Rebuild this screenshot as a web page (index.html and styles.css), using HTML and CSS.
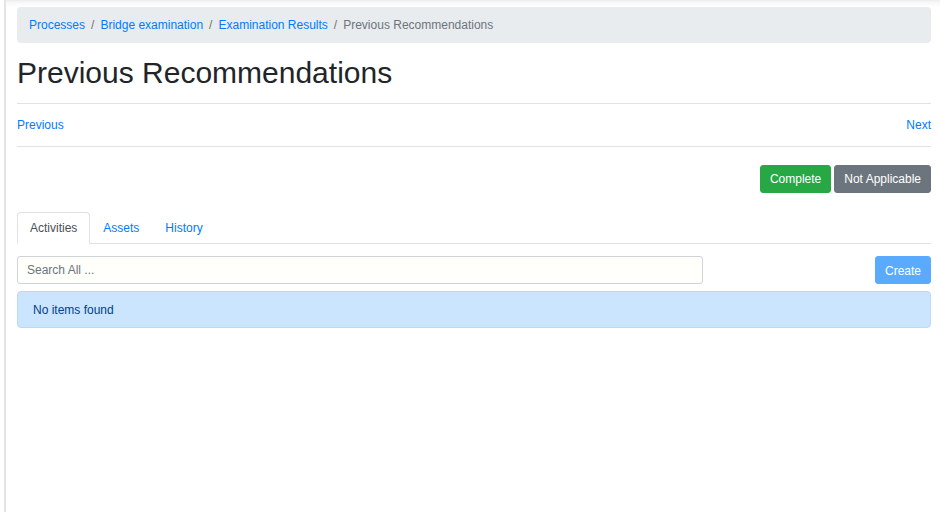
FILE: index.html
```html
<!DOCTYPE html>
<html>
<head>
<meta charset="utf-8">
<link rel="stylesheet" href="styles.css">
</head>
<body>
<div class="frame">
  <div class="page">
    <nav class="breadcrumb">
      <a href="#">Processes</a><span class="sep">/</span>
      <a href="#">Bridge examination</a><span class="sep">/</span>
      <a href="#">Examination Results</a><span class="sep">/</span>
      <span class="current">Previous Recommendations</span>
    </nav>
    <h1 class="title">Previous Recommendations</h1>
    <div class="pager">
      <a href="#">Previous</a>
      <a href="#">Next</a>
    </div>
    <div class="actions">
      <button class="btn btn-success">Complete</button>
      <button class="btn btn-secondary">Not Applicable</button>
    </div>
    <ul class="tabs">
      <li class="tab active">Activities</li>
      <li class="tab">Assets</li>
      <li class="tab">History</li>
    </ul>
    <div class="search-row">
      <input class="search" type="text" placeholder="Search All ...">
      <button class="btn btn-create">Create</button>
    </div>
    <div class="alert">No items found</div>
  </div>
</div>
</body>
</html>
```

FILE: styles.css
```css
* { box-sizing: border-box; }
html, body { margin: 0; padding: 0; background: #fff; }
body {
  font-family: "Liberation Sans", Arial, sans-serif;
  font-size: 12px;
  color: #212529;
  height: 512px;
  overflow: hidden;
}
a { color: #007bff; text-decoration: none; }
.frame {
  margin-left: 4px;
  border-left: 2px solid #e4e4e4;
  height: 512px;
  background: linear-gradient(#ececee 0, #f7f7f8 2px, #ffffff 7px);
}
.page {
  padding: 7px 9px 0 11px;
}
.breadcrumb {
  display: flex;
  align-items: center;
  background: #e9ecef;
  border-radius: 4px;
  height: 36px;
  padding: 0 12px;
  line-height: 18px;
}
.breadcrumb .sep { color: #6c757d; padding: 0 6px; }
.breadcrumb .current { color: #6c757d; }
.title {
  margin: 12px 0 0;
  font-size: 30px;
  font-weight: 400;
  line-height: 36px;
  color: #212529;
  padding-bottom: 12px;
  border-bottom: 1px solid #e2e2e2;
}
.pager {
  display: flex;
  justify-content: space-between;
  align-items: center;
  height: 43px;
  border-bottom: 1px solid #e2e2e2;
}
.actions {
  display: flex;
  justify-content: flex-end;
  gap: 3px;
  margin-top: 18px;
}
.btn {
  font-family: inherit;
  font-size: 12px;
  line-height: 18px;
  height: 28px;
  padding: 0 9px;
  border: 1px solid transparent;
  border-radius: 3px;
  color: #fff;
  cursor: pointer;
}
.btn-success { background: #28a745; border-color: #28a745; }
.btn-secondary { background: #6c757d; border-color: #6c757d; }
.btn-create { background: #5aaaff; border-color: #5aaaff; padding-top: 2px; }
.tabs {
  display: flex;
  list-style: none;
  margin: 19px 0 0;
  padding: 0;
  border-bottom: 1px solid #dee2e6;
}
.tab {
  height: 32px;
  line-height: 30px;
  padding: 0 12px;
  margin-bottom: -1px;
  color: #007bff;
  border: 1px solid transparent;
  border-radius: 4px 4px 0 0;
}
.tab.active {
  color: #495057;
  background: #fff;
  border-color: #dee2e6 #dee2e6 #fff;
}
.search-row {
  display: flex;
  justify-content: space-between;
  margin-top: 12px;
}
.search {
  width: 686px;
  height: 28px;
  border: 1px solid #ced4da;
  border-radius: 3px;
  background: #fffffb;
  padding: 0 9px;
  font-family: inherit;
  font-size: 12px;
  color: #495057;
}
.search::placeholder { color: #6c757d; }
.alert {
  margin-top: 7px;
  height: 37px;
  display: flex;
  align-items: center;
  padding: 0 15px;
  background: #cce5ff;
  border: 1px solid #b8daff;
  border-radius: 4px;
  color: #004085;
}
```
